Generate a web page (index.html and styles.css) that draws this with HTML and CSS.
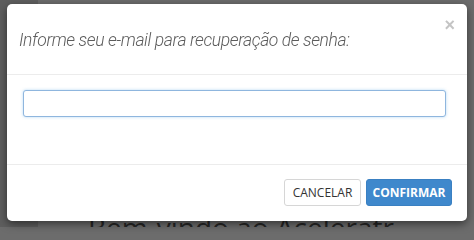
FILE: index.html
```html
<!DOCTYPE html>
<html lang="pt-BR">
<head>
<meta charset="utf-8">
<title>Recuperação de senha</title>
<link rel="stylesheet" href="styles.css">
</head>
<body>
<div class="page">
  <aside class="sidebar"></aside>
  <main class="main">
    <h1 class="welcome">Bem-vindo ao Aceleratr</h1>
  </main>
</div>
<div class="overlay">
  <div class="modal">
    <div class="modal-header">
      <h4 class="modal-title">Informe seu e-mail para recuperação de senha:</h4>
      <button class="close" type="button" aria-label="Fechar">×</button>
    </div>
    <div class="modal-body">
      <input class="email-input" type="email">
    </div>
    <div class="modal-footer">
      <button class="btn btn-default" type="button">CANCELAR</button>
      <button class="btn btn-primary" type="button">CONFIRMAR</button>
    </div>
  </div>
</div>
</body>
</html>
```

FILE: styles.css
```css
html, body {
  margin: 0;
  padding: 0;
  height: 227px;
  overflow: hidden;
}
body {
  background: #6c6c6c;
  font-family: "Open Sans", "Liberation Sans", sans-serif;
}
.page {
  display: flex;
  height: 227px;
  overflow: hidden;
}
.sidebar {
  width: 38px;
  background: #5e5e5e;
  flex: none;
}
.main {
  flex: 1;
  padding-left: 50px;
  overflow: hidden;
}
.welcome {
  margin: 210px 0 0;
  font-size: 28px;
  line-height: 34px;
  font-weight: 400;
  color: #262626;
  white-space: nowrap;
}
.overlay {
  position: fixed;
  inset: 0;
  padding: 4px 7px 0;
}
.modal {
  background: #fff;
  border-radius: 5px;
  box-shadow: 0 3px 9px rgba(0, 0, 0, 0.5);
  height: 217px;
  display: flex;
  flex-direction: column;
}
.modal-header {
  position: relative;
  height: 71px;
  border-bottom: 1px solid #ececec;
  box-sizing: border-box;
  display: flex;
  align-items: center;
  padding: 0 12px;
}
.modal-title {
  margin: 0;
  padding-top: 2px;
  font-family: "Roboto", "Liberation Sans", sans-serif;
  font-weight: 300;
  font-style: italic;
  font-size: 17.5px;
  letter-spacing: -0.4px;
  color: #5c5c5c;
}
.close {
  position: absolute;
  top: 11px;
  right: 12px;
  border: 0;
  background: none;
  padding: 0;
  font-family: "Liberation Sans", sans-serif;
  font-size: 18px;
  font-weight: 700;
  line-height: 20px;
  color: #c4c4c4;
}
.modal-body {
  height: 89px;
  box-sizing: border-box;
  padding: 15px 21px 0 16px;
}
.email-input {
  display: block;
  width: 100%;
  height: 27px;
  box-sizing: border-box;
  border: 1px solid #8fb6de;
  border-radius: 3px;
  box-shadow: 0 0 3px rgba(102, 175, 233, 0.5);
  outline: none;
  margin: 0;
}
.modal-footer {
  flex: 1;
  border-top: 1px solid #ececec;
  display: flex;
  justify-content: flex-end;
  align-items: flex-start;
  gap: 5px;
  padding: 14px 15px 0;
}
.btn {
  height: 27px;
  box-sizing: border-box;
  border-radius: 3px;
  font-family: "Open Sans", "Liberation Sans", sans-serif;
  font-size: 12px;
  padding: 0;
  cursor: pointer;
}
.btn-default {
  width: 77px;
  background: #fff;
  border: 1px solid #d6d6d6;
  color: #333;
}
.btn-primary {
  width: 86px;
  background: #3f88cc;
  border: 1px solid #3a80c2;
  color: #fff;
  font-weight: 700;
}
```
